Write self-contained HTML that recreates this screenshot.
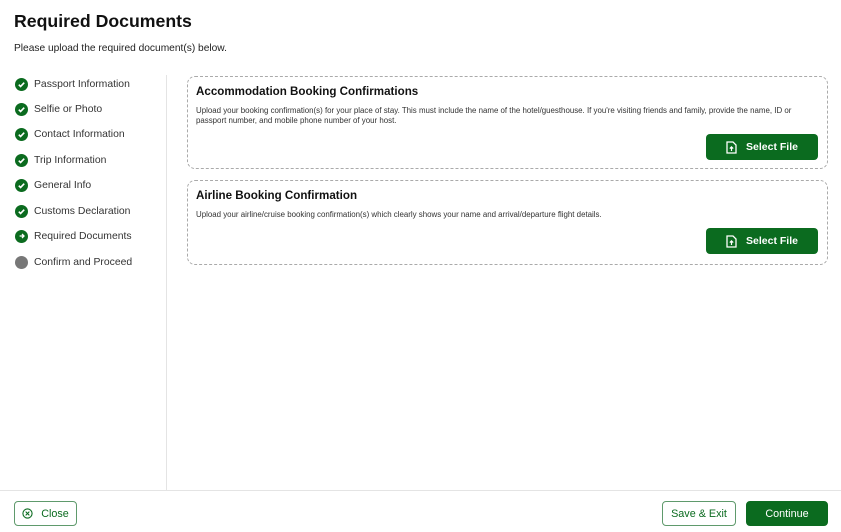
<!DOCTYPE html>
<html><head><style>
*{box-sizing:border-box;margin:0;padding:0}
body{width:841px;height:532px;background:#fff;font-family:"Liberation Sans",Arial,sans-serif;color:#111;position:relative;overflow:hidden}
.abs{position:absolute}
h1{position:absolute;left:14px;top:11px;font-size:17.7px;font-weight:bold}
.sub{left:14px;top:43px;font-size:10.2px;color:#222}
.item{position:absolute;left:15px;font-size:10.4px;color:#333;display:flex;align-items:center;height:14px}
.item .ic{width:13px;height:13px;border-radius:50%;background:#0b6b1f;margin-right:6px;display:flex;align-items:center;justify-content:center}
.vline{left:166px;top:75px;width:1px;height:415px;background:#e4e4e4}
.card{position:absolute;left:187px;width:641px;border:1px dashed #aaa;border-radius:8px}
.card h2{position:absolute;left:8px;font-size:11.6px;font-weight:bold;color:#111}
.card p{position:absolute;left:8px;font-size:7.9px;color:#333;line-height:10px;width:625px}
.btn{position:absolute;left:518px;width:112px;height:26px;background:#0b6b1f;border-radius:4px;color:#fff;font-size:10.5px;font-weight:bold;display:flex;align-items:center;justify-content:center}
.btn svg{margin-right:9px}
.fline{left:0;top:490px;width:841px;height:1px;background:#e4e4e4}
.ob{position:absolute;top:501px;height:25px;border:1px solid #5f9a6c;border-radius:4px;color:#0b6b1f;font-size:10.8px;display:flex;align-items:center;justify-content:center;background:#fff}
</style></head><body>
<h1>Required Documents</h1>
<div class="abs sub">Please upload the required document(s) below.</div>
<div class="item" style="top:77px"><span class="ic"><svg width="9" height="9" viewBox="0 0 10 10"><path d="M2 5.2l2 2L8 3" stroke="#fff" stroke-width="1.8" fill="none"/></svg></span>Passport Information</div>
<div class="item" style="top:102px"><span class="ic"><svg width="9" height="9" viewBox="0 0 10 10"><path d="M2 5.2l2 2L8 3" stroke="#fff" stroke-width="1.8" fill="none"/></svg></span>Selfie or Photo</div>
<div class="item" style="top:127px"><span class="ic"><svg width="9" height="9" viewBox="0 0 10 10"><path d="M2 5.2l2 2L8 3" stroke="#fff" stroke-width="1.8" fill="none"/></svg></span>Contact Information</div>
<div class="item" style="top:153px"><span class="ic"><svg width="9" height="9" viewBox="0 0 10 10"><path d="M2 5.2l2 2L8 3" stroke="#fff" stroke-width="1.8" fill="none"/></svg></span>Trip Information</div>
<div class="item" style="top:178px"><span class="ic"><svg width="9" height="9" viewBox="0 0 10 10"><path d="M2 5.2l2 2L8 3" stroke="#fff" stroke-width="1.8" fill="none"/></svg></span>General Info</div>
<div class="item" style="top:204px"><span class="ic"><svg width="9" height="9" viewBox="0 0 10 10"><path d="M2 5.2l2 2L8 3" stroke="#fff" stroke-width="1.8" fill="none"/></svg></span>Customs Declaration</div>
<div class="item" style="top:229px"><span class="ic"><svg width="8" height="8" viewBox="0 0 10 10"><path d="M2 5h5M5 2.5L7.5 5 5 7.5" stroke="#fff" stroke-width="1.6" fill="none"/></svg></span>Required Documents</div>
<div class="item" style="top:255px"><span class="ic" style="background:#777"></span>Confirm and Proceed</div>
<div class="abs vline"></div>
<div class="card" style="top:76px;height:93px">
<h2 style="top:8px">Accommodation Booking Confirmations</h2>
<p style="top:29px">Upload your booking confirmation(s) for your place of stay. This must include the name of the hotel/guesthouse. If you're visiting friends and family, provide the name, ID or passport number, and mobile phone number of your host.</p>
<div class="btn" style="top:57px"><svg width="11" height="13" viewBox="0 0 11 13"><path d="M1 1h6l3 3v8H1z" stroke="#fff" stroke-width="1.3" fill="none"/><path d="M5.5 10V6M3.8 7.6l1.7-1.7 1.7 1.7" stroke="#fff" stroke-width="1.2" fill="none"/></svg>Select File</div>
</div>
<div class="card" style="top:180px;height:85px">
<h2 style="top:8px">Airline Booking Confirmation</h2>
<p style="top:29px">Upload your airline/cruise booking confirmation(s) which clearly shows your name and arrival/departure flight details.</p>
<div class="btn" style="top:47px"><svg width="11" height="13" viewBox="0 0 11 13"><path d="M1 1h6l3 3v8H1z" stroke="#fff" stroke-width="1.3" fill="none"/><path d="M5.5 10V6M3.8 7.6l1.7-1.7 1.7 1.7" stroke="#fff" stroke-width="1.2" fill="none"/></svg>Select File</div>
</div>
<div class="abs fline"></div>
<div class="ob" style="left:14px;width:63px"><svg width="11" height="11" viewBox="0 0 12 12" style="margin-right:8px"><circle cx="6" cy="6" r="5" stroke="#0b6b1f" stroke-width="1.2" fill="none"/><path d="M4 4l4 4M8 4l-4 4" stroke="#0b6b1f" stroke-width="1.2"/></svg>Close</div>
<div class="ob" style="left:662px;width:74px">Save &amp; Exit</div>
<div class="ob" style="left:746px;width:82px;background:#0b6b1f;border-color:#0b6b1f;color:#fff">Continue</div>
</body></html>
